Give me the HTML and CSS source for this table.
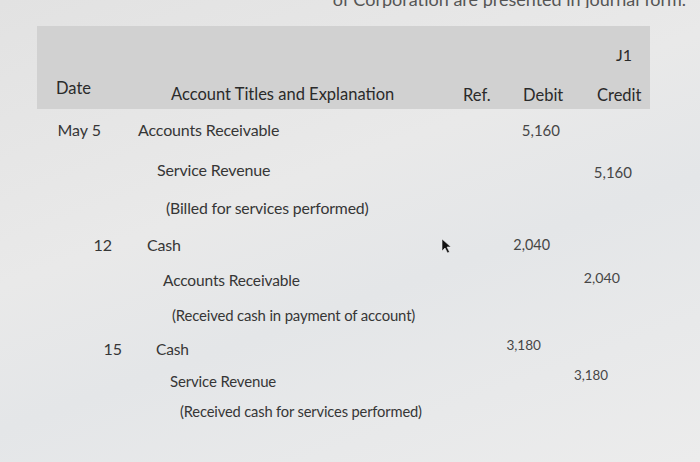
FILE: index.html
```html
<!DOCTYPE html>
<html>
<head>
<meta charset="utf-8">
<link rel="stylesheet" href="styles.css">
</head>
<body>
<div class="page">
  <div class="topline"><span>of Corporation are presented in journal form.</span></div>
  <div class="band">
    <div class="j1">J1</div>
    <div class="head">
      <span class="h-date">Date</span>
      <span class="h-acct">Account Titles and Explanation</span>
      <span class="h-ref">Ref.</span>
      <span class="h-dr">Debit</span>
      <span class="h-cr">Credit</span>
    </div>
  </div>
  <div class="rows">
    <div class="row r1"><span class="date">May 5</span><span class="acct">Accounts Receivable</span><span class="amt">5,160</span></div>
    <div class="row r2"><span class="acct">Service Revenue</span><span class="amt">5,160</span></div>
    <div class="row r3"><span class="acct">(Billed for services performed)</span></div>
    <div class="row r4"><span class="date">12</span><span class="acct">Cash</span><span class="amt">2,040</span></div>
    <div class="row r5"><span class="acct">Accounts Receivable</span><span class="amt">2,040</span></div>
    <div class="row r6"><span class="acct">(Received cash in payment of account)</span></div>
    <div class="row r7"><span class="date">15</span><span class="acct">Cash</span><span class="amt">3,180</span></div>
    <div class="row r8"><span class="acct">Service Revenue</span><span class="amt">3,180</span></div>
    <div class="row r9"><span class="acct">(Received cash for services performed)</span></div>
  </div>
  <svg class="cursor" width="12" height="16" viewBox="0 0 12 16"><path d="M1 1 L1 13 L4 10 L6.5 15 L8.5 14 L6 9 L10 9 Z" fill="#111" stroke="#eee" stroke-width="0.6"/></svg>
</div>
</body>
</html>
```

FILE: styles.css
```css
html, body {
  margin: 0;
  padding: 0;
}
body {
  width: 700px;
  height: 462px;
  overflow: hidden;
  font-family: Lato, "Open Sans", sans-serif;
  color: #363636;
}
.page {
  position: relative;
  width: 700px;
  height: 462px;
  background: linear-gradient(160deg, #e2e2e2 0%, #e9e9e9 40%, #e4e6e8 60%, #ececec 100%);
  overflow: hidden;
}
.topline {
  height: 8px;
  overflow: hidden;
  display: flex;
  justify-content: flex-end;
  padding-right: 14px;
}
.topline span {
  font-size: 18px;
  line-height: 20px;
  margin-top: -11px;
  color: #555;
  white-space: nowrap;
}
.band {
  margin: 18px 0 0 37px;
  width: 613px;
  height: 83px;
  background: #d1d1d1;
  box-sizing: border-box;
}
.j1 {
  padding-top: 20px;
  text-align: right;
  padding-right: 18px;
  font-size: 16px;
  line-height: 18px;
  color: #2a2a2a;
}
.head {
  display: grid;
  grid-template-columns: 134px 292px 60px 74px auto;
  margin-top: 21px;
  font-size: 16.5px;
  line-height: 20px;
  color: #2a2a2a;
}
.head span { white-space: nowrap; }
.h-date { padding-left: 19px; transform: translateY(-7px); }
.h-acct { transform: translateY(-1px); }
.rows {
  padding-top: 1px;
}
.row {
  display: grid;
  grid-template-columns: var(--de) calc(var(--ts) - var(--de)) calc(var(--ae) - var(--ts));
  height: var(--h);
  align-items: center;
  font-size: var(--fs, 16px);
  line-height: 20px;
}
.date {
  grid-column: 1;
  grid-row: 1;
  justify-self: end;
  font-size: 16px;
}
.acct {
  grid-column: 3;
  grid-row: 1;
  justify-self: start;
  white-space: nowrap;
  letter-spacing: -0.15px;
}
.amt {
  grid-column: 3;
  grid-row: 1;
  justify-self: end;
  color: #464646;
  font-size: var(--nfs, 15px);
  transform: translateY(var(--ay, 0px));
}
.r1 { --h: 40px; --de: 101px; --ts: 138px; --ae: 560px; }
.r2 { --h: 39px; --de: 101px; --ts: 157px; --ae: 632px; --ay: 2px; }
.r3 { --h: 38px; --de: 101px; --ts: 166px; --ae: 600px; --fs: 15.8px; }
.r4 { --h: 35px; --de: 112px; --ts: 147px; --ae: 550px; --nfs: 14.4px; }
.r5 { --h: 35px; --de: 101px; --ts: 163px; --ae: 620px; --ay: -2px; --fs: 15.5px; --nfs: 14.2px; }
.r6 { --h: 35px; --de: 101px; --ts: 172px; --ae: 600px; --fs: 14.9px; }
.r7 { --h: 34px; --de: 122px; --ts: 156px; --ae: 541px; --ay: -4px; --fs: 15.5px; --nfs: 13.6px; }
.r8 { --h: 30px; --de: 101px; --ts: 170px; --ae: 608px; --ay: -6px; --fs: 15px; --nfs: 13.4px; }
.r9 { --h: 30px; --de: 101px; --ts: 180px; --ae: 600px; --fs: 14.7px; }
.cursor {
  position: absolute;
  left: 441px;
  top: 238px;
}
```
